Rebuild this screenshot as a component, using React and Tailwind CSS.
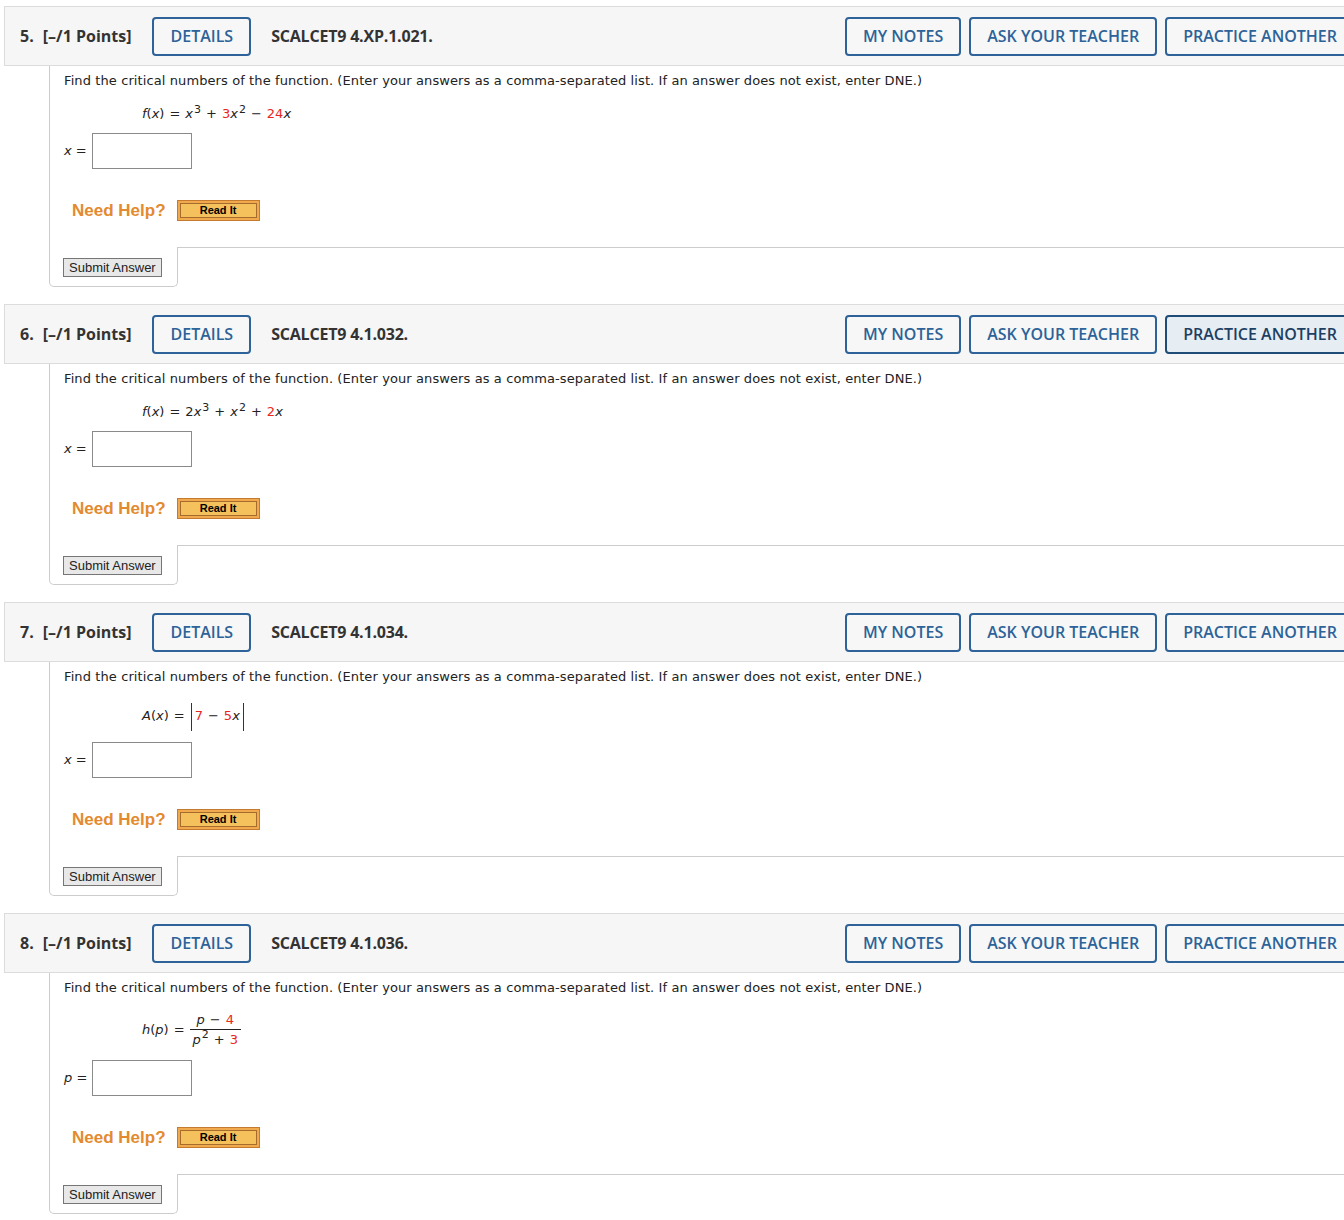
import React from "react";

const R = ({ children }) => <span className="text-[#e8261c]">{children}</span>;
const V = ({ children }) => <i className="italic">{children}</i>;
const Op = ({ children }) => <span className="mx-[5px]">{children}</span>;
const Sup = ({ children }) => <sup className="text-[11px] ml-[1px]">{children}</sup>;

const questions = [
  {
    num: "5.",
    code: "SCALCET9 4.XP.1.021.",
    varName: "x",
    formula: (
      <div className="h-[16px] leading-[16px]">
        <V>f</V>(<V>x</V>)<Op>=</Op>
        <V>x</V>
        <Sup>3</Sup>
        <Op>+</Op>
        <R>3</R>
        <V>x</V>
        <Sup>2</Sup>
        <Op>−</Op>
        <R>24</R>
        <V>x</V>
      </div>
    ),
  },
  {
    num: "6.",
    code: "SCALCET9 4.1.032.",
    varName: "x",
    active: true,
    formula: (
      <div className="h-[16px] leading-[16px]">
        <V>f</V>(<V>x</V>)<Op>=</Op>2<V>x</V>
        <Sup>3</Sup>
        <Op>+</Op>
        <V>x</V>
        <Sup>2</Sup>
        <Op>+</Op>
        <R>2</R>
        <V>x</V>
      </div>
    ),
  },
  {
    num: "7.",
    code: "SCALCET9 4.1.034.",
    varName: "x",
    formula: (
      <div className="h-[29px] flex items-center">
        <span className="-mt-[2px]">
          <V>A</V>(<V>x</V>)<Op>=</Op>
        </span>
        <span className="ml-[1px] border-l border-r border-[#333] h-[28px] flex items-center px-[3px]">
          <span className="-mt-[2px]">
            <R>7</R>
            <Op>−</Op>
            <R>5</R>
            <V>x</V>
          </span>
        </span>
      </div>
    ),
  },
  {
    num: "8.",
    code: "SCALCET9 4.1.036.",
    varName: "p",
    formula: (
      <div className="h-[36px] flex items-center">
        <span className="-mt-[3px]">
          <V>h</V>(<V>p</V>)<Op>=</Op>
        </span>
        <span className="-mt-[2px] inline-flex flex-col items-center">
          <span className="leading-[16px] pb-[1px] px-[4px]">
            <V>p</V>
            <Op>−</Op>
            <R>4</R>
          </span>
          <span className="w-full border-t border-[#222]"></span>
          <span className="leading-[19px] px-[3px]">
            <V>p</V>
            <Sup>2</Sup>
            <Op>+</Op>
            <R>3</R>
          </span>
        </span>
      </div>
    ),
  },
];

const HeaderButton = ({ children, active }) => (
  <button
    className={`h-[39px] px-[16px] rounded-[4px] border-2 text-[16px] font-semibold ${
      active
        ? "bg-[#e6edf3] border-[#1f4d78] text-[#1d3f62]"
        : "bg-[#f7f7f7] border-[#2d6398] text-[#2d6398]"
    }`}
  >
    {children}
  </button>
);

const Question = ({ q }) => (
  <div>
    <div className="ml-[4px] w-[1360px] h-[60px] bg-[#f6f6f6] border border-[#dcdcdc] flex items-center pl-[15px] font-['Open_Sans',sans-serif] text-[#333]">
      <span className="text-[16px] font-bold">{q.num}</span>
      <span className="ml-[9px] text-[16px] font-bold">[–/1 Points]</span>
      <div className="ml-[21px]">
        <HeaderButton>DETAILS</HeaderButton>
      </div>
      <span className="ml-[20px] text-[16px] font-bold tracking-[-0.2px] text-[#333]">{q.code}</span>
      <div className="ml-auto mr-[8px] flex gap-[8px]">
        <HeaderButton>MY NOTES</HeaderButton>
        <HeaderButton>ASK YOUR TEACHER</HeaderButton>
        <HeaderButton active={q.active}>PRACTICE ANOTHER</HeaderButton>
      </div>
    </div>
    <div className="ml-[49px] w-[1300px] font-['DejaVu_Sans',Verdana,sans-serif] text-[13px] text-[#222]">
      <div className="border-l border-[#cccccc] pl-[14px] pt-[7px] pb-[26px]">
        <p className="leading-[16px] tracking-[0.1px]">
          Find the critical numbers of the function. (Enter your answers as a comma-separated list. If an answer does not exist, enter DNE.)
        </p>
        <div className="mt-[17px] pl-[78px]">{q.formula}</div>
        <div className="mt-[11px] flex items-center">
          <span>
            <V>{q.varName}</V> =
          </span>
          <div className="ml-[5px] w-[100px] h-[36px] border border-[#8a8a8a] bg-white"></div>
        </div>
        <div className="mt-[31px] flex items-center pl-[8px]">
          <span className="font-['Liberation_Sans',Arial,sans-serif] font-bold text-[17px] text-[#e38a2f] leading-[21px]">
            Need Help?
          </span>
          <div className="ml-[11px] w-[83px] h-[21px] bg-[#f0a94c] border border-[#c47a2f] p-[2px]">
            <div className="h-full bg-[#f5c15d] border border-[#a66c2e] flex items-center justify-center font-['Liberation_Sans',Arial,sans-serif] font-bold text-[11px] text-black leading-none">
              Read It
            </div>
          </div>
        </div>
      </div>
      <div className="flex">
        <div className="w-[129px] h-[40px] border-l border-b border-r border-[#cccccc] rounded-b-[5px] pl-[13px] pt-[11px]">
          <button className="h-[19px] px-[5px] bg-[#e8e8e8] border border-[#767676] font-['Liberation_Sans',Arial,sans-serif] text-[13px] text-[#222] leading-[17px]">
            Submit Answer
          </button>
        </div>
        <div className="flex-1 border-t border-[#cccccc]"></div>
      </div>
    </div>
  </div>
);

export default function App() {
  return (
    <div className="w-[1344px] h-[1220px] overflow-hidden bg-white pt-[6px] flex flex-col gap-[17px]">
      {questions.map((q) => (
        <Question key={q.num} q={q} />
      ))}
    </div>
  );
}
